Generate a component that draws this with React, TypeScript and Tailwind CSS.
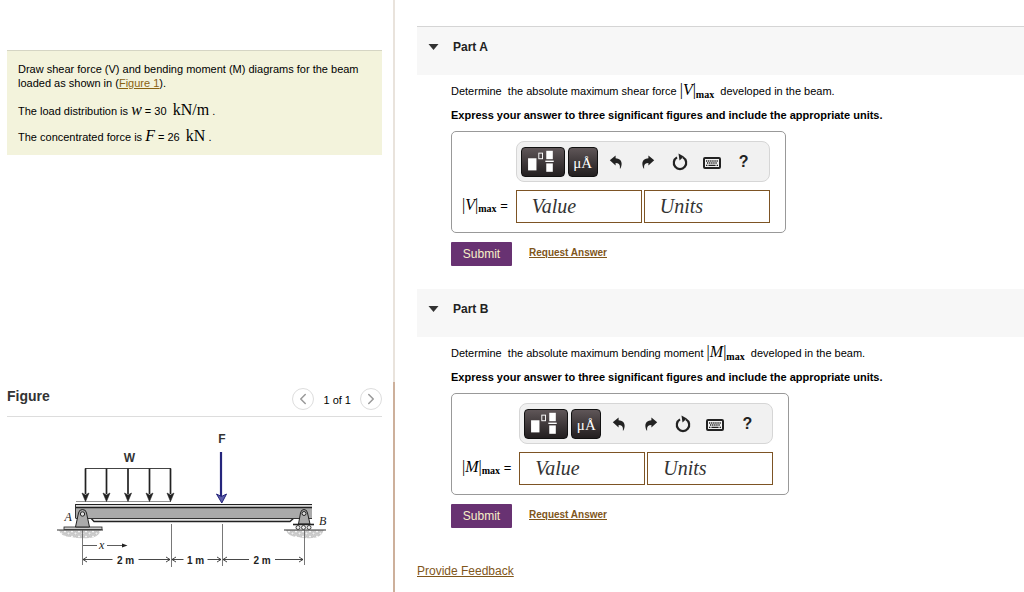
import { ChevronLeft, ChevronRight } from "lucide-react";

const parts = [
    { id: "A", symbol: "V", quantity: "shear force" },
    { id: "B", symbol: "M", quantity: "bending moment" },
];

function MaxOf({ symbol }: { symbol: string }) {
    return (
        <span className="font-['Liberation_Serif',serif] text-base leading-none font-normal whitespace-nowrap">
            |<i>{symbol}</i>|<sub className="text-[10px] font-bold">max</sub>
        </span>
    )
}

function TemplateIcon() {
    return (
        <svg viewBox="0 0 44 30" className="w-full h-full">
            <rect x="6" y="11" width="9" height="13" fill="#fff" />
            <rect x="17.5" y="5.5" width="4" height="6" fill="none" stroke="#fff" />
            <rect x="25.5" y="3" width="7" height="9" fill="#fff" />
            <rect x="24.5" y="13.5" width="9" height="1.5" fill="#fff" />
            <rect x="25.5" y="16.5" width="7" height="9" fill="#fff" />
        </svg>
    )
}

function UndoIcon({ className }: { className?: string }) {
    return (
        <svg viewBox="0 0 14 14" className={className}>
            <path d="M0.8 5.2 L6.6 0.6 V3.2 C11.6 3.4 14.4 7 11.4 13.4 H10.8 C11.4 9.8 10.2 8.2 6.6 8 V10.4 Z" fill="#222" />
        </svg>
    )
}

function ResetIcon() {
    return (
        <svg viewBox="0 0 16 18" className="w-4 h-[18px]">
            <path d="M11 4.4 A6.2 6.2 0 1 1 5 4.4" fill="none" stroke="#222" strokeWidth="2.2" />
            <path d="M6.5 0.5 L11.8 3.6 L7.5 7.6 Z" fill="#222" />
        </svg>
    )
}

function KeyboardIcon() {
    return (
        <svg viewBox="0 0 18 12" className="w-[18px] h-3">
            <rect x="1" y="1" width="16" height="10" rx="1" fill="#f1f1f1" stroke="#222" strokeWidth="2" />
            <path d="M3 4 H15 M4 6 H14" stroke="#222" strokeWidth="1.3" strokeDasharray="1.3 0.8" />
            <path d="M3 8.4 H4.4 M5.4 8.4 H12.6 M13.6 8.4 H15" stroke="#222" strokeWidth="1.3" />
        </svg>
    )
}

function Toolbar() {
    const tool = "flex w-8 h-[30px] items-center justify-center"
    const dark = "h-[30px] rounded-[4px] border border-[#111] bg-linear-to-b from-[#5f5658] to-[#231f20] text-white"
    return (
        <div className="col-start-2 flex h-[41px] items-center rounded-lg border border-[#d6d6d6] bg-[#f1f1f1] pl-1">
            <button aria-label="Templates" className={"w-11 mr-[3px] " + dark}>
                <TemplateIcon />
            </button>
            <button aria-label="Units" className={"w-[30px] mr-0.5 pt-1 font-['Liberation_Serif',serif] text-[15px] leading-none " + dark}>
                μÅ
            </button>
            <button aria-label="Undo" className={tool}><UndoIcon className="w-3.5 h-3.5" /></button>
            <button aria-label="Redo" className={tool}><UndoIcon className="w-3.5 h-3.5 -scale-x-100" /></button>
            <button aria-label="Reset" className={tool}><ResetIcon /></button>
            <button aria-label="Keyboard shortcuts" className={tool + " pt-0.5"}><KeyboardIcon /></button>
            <button className={tool + " text-base font-bold text-[#222]"}>?</button>
        </div>
    )
}

function Part({ id, symbol, quantity }: { id: string; symbol: string; quantity: string }) {
    const field = "w-[126px] h-[33px] border border-[#7d5424] bg-white px-[15px] font-['Liberation_Serif',serif] text-xl italic outline-none placeholder:text-[#333] placeholder:opacity-100"
    return (
        <section className="mb-[23px]">
            <button className="flex w-full h-12 items-start bg-[#f7f7f7] pt-[11px] pl-[11px] text-left">
                <svg viewBox="0 0 11 6" className="mt-1.5 mr-[14px] w-[11px] h-1.5">
                    <path d="M0.5 0 H10.5 L5.5 6 Z" fill="#333" />
                </svg>
                <span className="text-xs leading-[18px] font-bold text-[#222]">Part {id}</span>
            </button>
            <div className="pl-[34px]">
                <p className="mt-[7px] leading-[18px]">
                    Determine&nbsp; the absolute maximum {quantity} <MaxOf symbol={symbol} />&nbsp; developed in the beam.
                </p>
                <p className="mt-1.5 leading-[18px] font-bold">
                    Express your answer to three significant figures and include the appropriate units.
                </p>
                <div className="mt-[7px] inline-grid grid-cols-[auto_auto] gap-x-2 gap-y-2 rounded-[5px] border border-[#999] py-[9px] pr-[15px] pl-2.5 align-top">
                    <Toolbar />
                    <label htmlFor={"value-" + id} className="self-center pb-0.5 text-[13px]">
                        <MaxOf symbol={symbol} /> =
                    </label>
                    <div className="flex gap-0.5">
                        <input id={"value-" + id} placeholder="Value" className={field} />
                        <input aria-label="Units" placeholder="Units" className={field} />
                    </div>
                </div>
                <div className="mt-[9px] flex items-start">
                    <button className="w-[61px] h-6 rounded-[1px] bg-[#683272] text-xs text-[#f7efc8]">Submit</button>
                    <a href="#" className="ml-[17px] mt-[3px] text-[10px] leading-4 font-bold text-[#80561b] underline">Request Answer</a>
                </div>
            </div>
        </section>
    )
}

function DownArrow({ x }: { x: number }) {
    return (
        <g>
            <path d={`M${x} 468.5 V494`} stroke="#222" strokeWidth="1.7" />
            <path d={`M${x - 3.5} 493 L${x} 501.5 L${x + 3.5} 493 L${x} 495 Z`} fill="#222" stroke="#222" strokeWidth="0.6" />
        </g>
    )
}

// Dimension line with an open arrowhead on both ends and room for its label
function Dimension({ from, to, label, gap }: { from: number; to: number; label: string; gap: number }) {
    const mid = (from + to) / 2 - 1
    return (
        <g>
            <path
                d={`M${from + 1} 559.5 H${mid - gap} M${mid + gap} 559.5 H${to - 1} M${from + 5} 557 L${from + 1} 559.5 L${from + 5} 562 M${to - 5} 557 L${to - 1} 559.5 L${to - 5} 562`}
                fill="none" stroke="#333" strokeWidth="0.9"
            />
            <text x={mid} y="564" textAnchor="middle" fontSize="10" fontWeight="bold" fill="#222">{label}</text>
        </g>
    )
}

function Ground({ x, width }: { x: number; width: number }) {
    return (
        <g>
            <path d={`M${x + 2} 530 H${x + width - 2} Q${x + width - 5} 538 ${x + width - 14} 538 Q${x + width / 2} 539 ${x + 14} 537 Q${x + 4} 537 ${x + 2} 530 Z`} fill="url(#gravel)" />
            <path d={`M${x} 530 H${x + width}`} stroke="#333" strokeWidth="1" />
        </g>
    )
}

function BeamFigure() {
    return (
        <svg viewBox="50 428 290 150" className="ml-[50px] mt-[11px] block w-[290px] h-[150px]" role="img" aria-label="Loaded beam">
            <defs>
                <pattern id="gravel" width="7" height="5" patternUnits="userSpaceOnUse">
                    <rect width="7" height="5" fill="#ccc" />
                    <circle cx="2" cy="1.5" r="1.5" fill="#f5f5f5" stroke="#aaa" strokeWidth="0.5" />
                    <circle cx="5.5" cy="3.5" r="1.4" fill="#eee" stroke="#aaa" strokeWidth="0.5" />
                </pattern>
            </defs>
            <text x="129.5" y="462" textAnchor="middle" fontSize="12" fontWeight="bold" fill="#333">W</text>
            <text x="222" y="443" textAnchor="middle" fontSize="12" fontWeight="bold" fill="#333">F</text>
            <path d="M85 468.5 H171" stroke="#444" />
            <path d="M76 501.5 H171" stroke="#777" strokeWidth="0.8" />
            {[85.5, 106.5, 128, 149.5, 170.5].map((x) => <DownArrow key={x} x={x} />)}

            <path d="M90 517 L94 521.5 H290 L295 517" fill="#e5e5e5" stroke="#222" strokeWidth="1.3" />
            <rect x="75.5" y="504" width="236.5" height="14" fill="#aaa" />
            <rect x="75.5" y="504" width="236.5" height="3" fill="#ddd" />
            <path d="M75.5 504.5 H312" stroke="#222" strokeWidth="1.2" />
            <path d="M75.5 507.5 H312" stroke="#222" strokeWidth="1.6" />
            <path d="M75.5 518.5 H312 M75.5 504 V518" stroke="#333" />

            <path d="M221 452 V497" stroke="#25257c" strokeWidth="2.2" />
            <path d="M216.5 494 L221.8 503 L226.5 494 L221.5 496.5 Z" fill="#5c5ca8" stroke="#25257c" />

            <Ground x={57} width={46} />
            <Ground x={284} width={42} />
            <rect x="64" y="527" width="38" height="2.5" fill="#ccc" stroke="#222" strokeWidth="0.8" />
            <path d="M75.5 527 L78.5 513 Q79 509.5 82.5 509.5 Q86 509.5 86.5 513 L89.5 527 Z" fill="#aaa" stroke="#222" />
            <circle cx="82.5" cy="514" r="2.2" fill="#ddd" stroke="#222" />
            <path d="M298.5 524 L300.5 513 Q301 509.5 304 509.5 Q307 509.5 307.5 513 L310 524 Z" fill="#aaa" stroke="#222" />
            <circle cx="304" cy="513.5" r="2" fill="#ddd" stroke="#222" />
            <path d="M293 524.5 H314" stroke="#222" strokeWidth="1.6" />
            {[298, 303.5, 309].map((x) => <circle key={x} cx={x} cy="527.5" r="2" fill="#eee" stroke="#333" strokeWidth="0.9" />)}

            <path d="M82.5 530 V565 M171.5 524 V567 M222.5 524 V566 M304.5 530 V565" stroke="#555" strokeWidth="0.8" />
            <path d="M83 545.5 H97 M107 545.5 H124" stroke="#333" strokeWidth="0.8" />
            <path d="M122 543.5 L127.5 545.5 L122 547.5 Z" fill="#222" />
            <g className="font-['Liberation_Serif',serif] italic" fill="#222">
                <text x="99" y="549" fontSize="12">x</text>
                <text x="64.5" y="521" fontSize="12">A</text>
                <text x="319" y="524.5" fontSize="12">B</text>
            </g>
            <Dimension from={82} to={171} label="2 m" gap={13} />
            <Dimension from={171} to={222} label="1 m" gap={12} />
            <Dimension from={222} to={304} label="2 m" gap={13} />
        </svg>
    )
}

export default function App() {
    const pager = "flex w-[22px] h-[22px] items-center justify-center rounded-full border border-[#ddd] text-[#999]"
    const math = "font-['Liberation_Serif',serif] text-base leading-none"
    return (
        <div className="flex min-h-screen bg-white font-['Liberation_Sans',Arial,sans-serif] text-[11px] text-black">
            <aside className="flex w-[395px] shrink-0 flex-col">
                <div className="min-h-[382px] border-r-2 border-[#e9e3dc] pt-[50px] pr-[11px] pl-[7px]">
                    <div className="border-t border-[#d5d5c4] bg-[#f3f3dc] px-[11px] pt-[11px] pb-[9px]">
                        <p className="leading-[14px]">
                            Draw shear force (V) and bending moment (M) diagrams for the beam loaded as shown in (<a href="#figure" className="text-[#8a6212] underline">Figure 1</a>).
                        </p>
                        <p className="mt-3 leading-[18px]">
                            The load distribution is <i className={math}>w</i> = 30&nbsp; <span className={math}>kN/m</span> .
                        </p>
                        <p className="mt-2 leading-[18px]">
                            The concentrated force is <i className={math}>F</i> = 26&nbsp; <span className={math}>kN</span> .
                        </p>
                    </div>
                </div>
                <div id="figure" className="grow border-r-2 border-[#cdb09b] pr-[11px] pl-[7px]">
                    <div className="flex h-[35px] items-center border-b border-[#ddd]">
                        <h2 className="mr-auto pb-1.5 text-sm font-bold text-[#333]">Figure</h2>
                        <button aria-label="Previous figure" className={pager}><ChevronLeft size={18} className="shrink-0" /></button>
                        <span className="mx-[9px] pt-0.5">1 of 1</span>
                        <button aria-label="Next figure" className={pager}><ChevronRight size={18} className="shrink-0" /></button>
                    </div>
                    <div className="-ml-[7px]">
                        <BeamFigure />
                    </div>
                </div>
            </aside>
            <main className="grow pt-[26px] pl-[22px]">
                <div className="border-t border-[#d5d5d5]">
                    {parts.map((part) => <Part key={part.id} {...part} />)}
                </div>
                <a href="#" className="mt-3 inline-block text-xs leading-4 text-[#80561b] underline">Provide Feedback</a>
            </main>
        </div>
    )
}
